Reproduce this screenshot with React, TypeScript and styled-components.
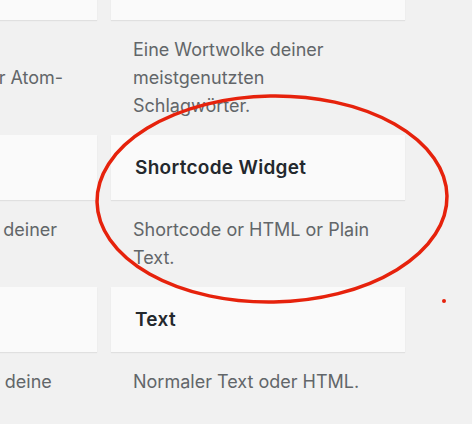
import React from 'react'
import styled, { createGlobalStyle } from 'styled-components'

const GlobalStyle = createGlobalStyle`
  html, body {
    margin: 0;
    padding: 0;
    background: #ffffff;
    overflow: hidden;
  }
`

const Panel = styled.div`
  position: relative;
  width: 472px;
  height: 424px;
  background: #f1f1f1;
  overflow: hidden;
  font-family: Inter, 'Noto Sans', sans-serif;
  box-shadow: 0 1px 1px rgba(0, 0, 0, 0.04);
`

const WidgetGrid = styled.div`
  display: grid;
  grid-template-columns: 294px 294px;
  column-gap: 14px;
  margin-left: -197px;
  margin-top: -45px;
`

const Widget = styled.div`
  display: flex;
  flex-direction: column;
  padding-bottom: 15px;
`

const Card = styled.div`
  height: 65px;
  display: flex;
  align-items: center;
  padding: 0 24px;
  background: #fafafa;
  box-shadow: 0 1px 1px rgba(0, 0, 0, 0.07);
`

const Title = styled.h3`
  margin: 0;
  font-size: 19px;
  font-weight: 600;
  letter-spacing: 0.3px;
  color: #23282d;
`

const Desc = styled.p`
  margin: 16px 0 0;
  padding: 0 22px;
  font-size: 18px;
  line-height: 28px;
  color: #626669;
  white-space: pre-line;
`

const Annotation = styled.svg`
  position: absolute;
  left: 0;
  top: 0;
  pointer-events: none;
`

interface WidgetInfo {
  title: string
  desc: string
}

const widgets: WidgetInfo[] = [
  { title: 'RSS', desc: 'Einträge aus einem\nbeliebigen RSS- oder Atom-\nFeed.' },
  { title: 'Schlagwörter-Wolke', desc: 'Eine Wortwolke deiner\nmeistgenutzten\nSchlagwörter.' },
  { title: 'Seiten', desc: 'Eine Liste der Seiten deiner\nWebsite.' },
  { title: 'Shortcode Widget', desc: 'Shortcode or HTML or Plain\nText.' },
  { title: 'Suche', desc: 'Ein Suchformular für deine\nWebsite.' },
  { title: 'Text', desc: 'Normaler Text oder HTML.' },
]

const App: React.FC = () => {
  return (
    <>
      <GlobalStyle />
      <Panel>
        <WidgetGrid>
          {widgets.map((w) => (
            <Widget key={w.title}>
              <Card>
                <Title>{w.title}</Title>
              </Card>
              <Desc>{w.desc}</Desc>
            </Widget>
          ))}
        </WidgetGrid>
        <Annotation width="474" height="428" viewBox="0 0 474 428">
          <ellipse cx="272" cy="199" rx="175" ry="103" transform="rotate(-1 272 199)" fill="none" stroke="#e6220c" strokeWidth="3.5" />
          <circle cx="444" cy="301" r="2" fill="#e6220c" />
        </Annotation>
      </Panel>
    </>
  )
}

export default App
